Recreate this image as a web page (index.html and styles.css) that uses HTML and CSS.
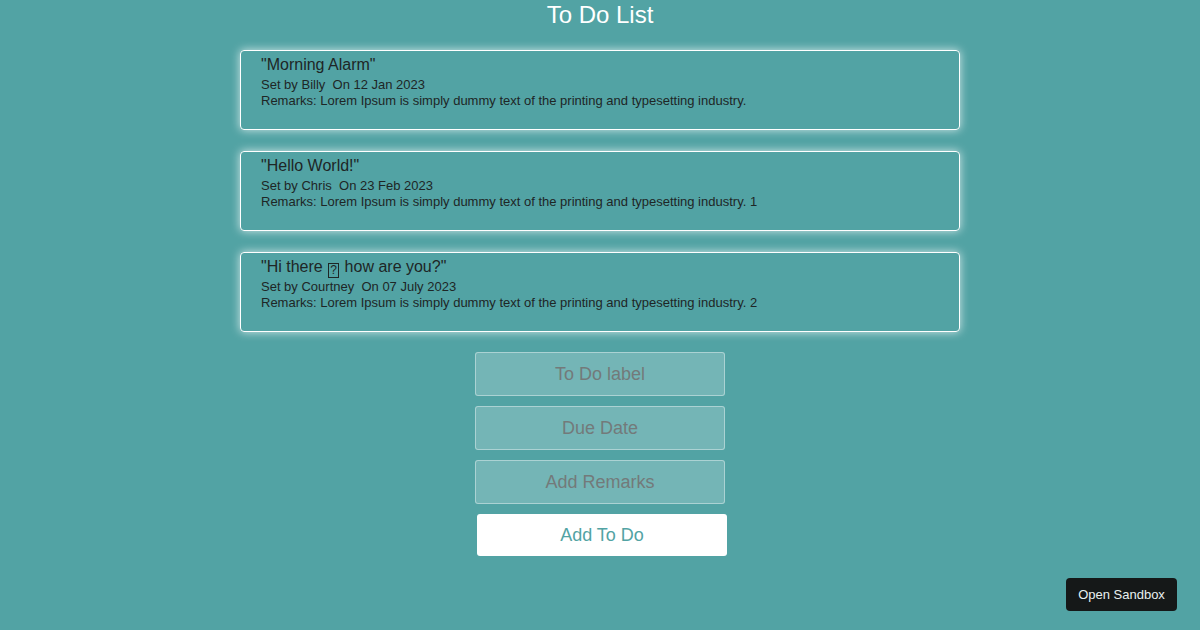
FILE: index.html
```html
<!DOCTYPE html>
<html>
<head>
<meta charset="utf-8">
<link rel="stylesheet" href="styles.css">
</head>
<body>
<div class="app">
  <h1 class="title">To Do List</h1>
  <div class="list">
    <div class="card">
      <div class="card-title">"Morning Alarm"</div>
      <div class="card-meta">Set by Billy&nbsp; On 12 Jan 2023</div>
      <div class="card-meta">Remarks: Lorem Ipsum is simply dummy text of the printing and typesetting industry.</div>
    </div>
    <div class="card">
      <div class="card-title">"Hello World!"</div>
      <div class="card-meta">Set by Chris&nbsp; On 23 Feb 2023</div>
      <div class="card-meta">Remarks: Lorem Ipsum is simply dummy text of the printing and typesetting industry. 1</div>
    </div>
    <div class="card">
      <div class="card-title">"Hi there <span class="tofu">?</span> how are you?"</div>
      <div class="card-meta">Set by Courtney&nbsp; On 07 July 2023</div>
      <div class="card-meta">Remarks: Lorem Ipsum is simply dummy text of the printing and typesetting industry. 2</div>
    </div>
  </div>
  <form class="form">
    <input class="field" type="text" placeholder="To Do label">
    <input class="field" type="text" placeholder="Due Date">
    <input class="field" type="text" placeholder="Add Remarks">
    <button class="submit" type="button">Add To Do</button>
  </form>
</div>
<button class="sandbox" type="button">Open Sandbox</button>
</body>
</html>
```
FILE: styles.css
```css
html, body {
  margin: 0;
  padding: 0;
  background: #52a3a4;
  font-family: "Liberation Sans", Arial, sans-serif;
  height: 100%;
}
.app {
  display: flex;
  flex-direction: column;
  align-items: center;
}
.title {
  margin: 0;
  padding-top: 1px;
  font-size: 24px;
  line-height: 28px;
  font-weight: normal;
  color: #ffffff;
}
.list {
  margin-top: 21px;
  display: flex;
  flex-direction: column;
  gap: 21px;
}
.card {
  box-sizing: border-box;
  width: 720px;
  height: 80px;
  padding: 5px 20px;
  border: 1px solid #ffffff;
  border-radius: 4px;
  box-shadow: 0 0 10px rgba(255, 255, 255, 0.75);
  color: #1e2626;
}
.card-title {
  font-size: 16px;
  line-height: 18px;
  height: 18px;
}
.card-meta {
  font-size: 13px;
  line-height: 16px;
}
.card-title + .card-meta {
  margin-top: 3px;
}
.tofu {
  display: inline-block;
  box-sizing: border-box;
  width: 11px;
  height: 15px;
  margin: -3px 1px;
  border: 1px solid #1e2626;
  font-size: 12px;
  line-height: 13px;
  text-align: center;
  vertical-align: -2px;
}
.form {
  margin: 20px 0 0;
  display: flex;
  flex-direction: column;
  align-items: center;
  gap: 10px;
}
.field {
  box-sizing: border-box;
  width: 250px;
  height: 44px;
  margin: 0;
  padding: 0 8px;
  background: rgba(255, 255, 255, 0.2);
  border: 1px solid rgba(255, 255, 255, 0.4);
  border-radius: 3px;
  font-family: "Liberation Sans", Arial, sans-serif;
  font-size: 18px;
  text-align: center;
  color: #333;
  outline: none;
}
.field::placeholder {
  color: #737a7a;
  opacity: 1;
}
.submit {
  box-sizing: border-box;
  width: 250px;
  height: 42px;
  margin: 0 0 0 4px;
  background: #ffffff;
  border: none;
  border-radius: 3px;
  font-family: "Liberation Sans", Arial, sans-serif;
  font-size: 18px;
  color: #52a3a4;
}
.sandbox {
  position: fixed;
  right: 23px;
  bottom: 19px;
  box-sizing: border-box;
  width: 111px;
  height: 33px;
  padding: 0;
  background: #151818;
  border: none;
  border-radius: 4px;
  font-family: "Liberation Sans", Arial, sans-serif;
  font-size: 13px;
  color: #e8f0f0;
}
```
